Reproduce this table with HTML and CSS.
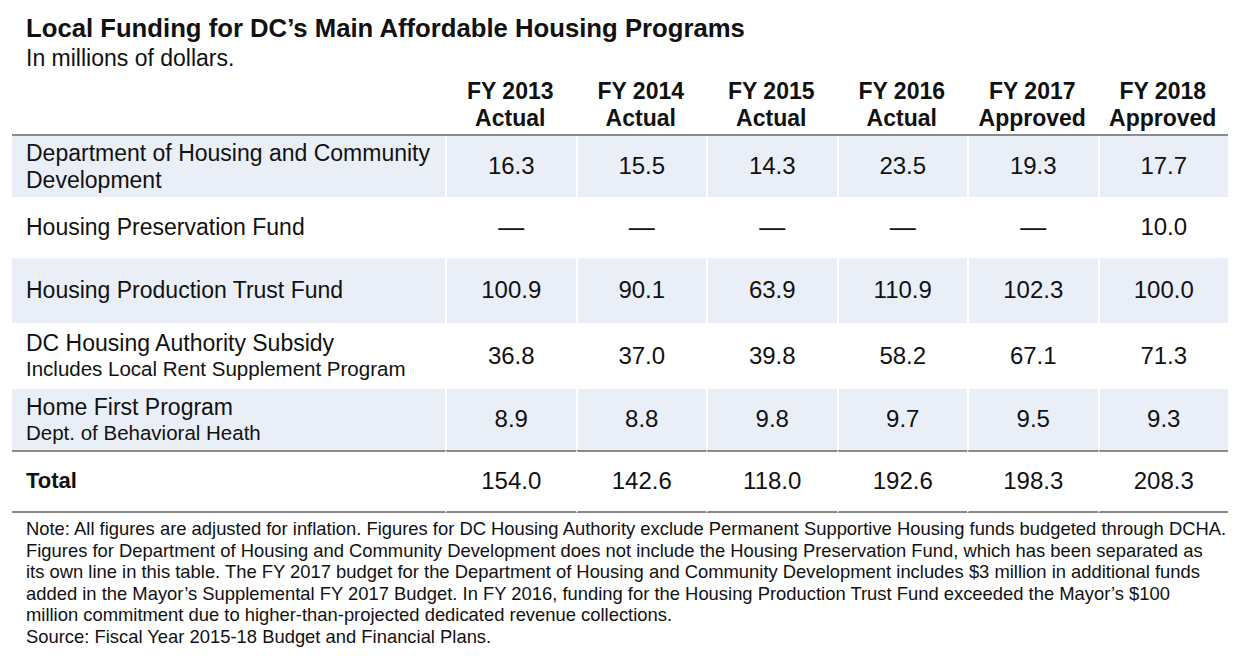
FILE: index.html
```html
<!DOCTYPE html>
<html>
<head>
<meta charset="utf-8">
<link rel="stylesheet" href="styles.css">
</head>
<body>
<div class="page">
  <header class="head">
    <h1 class="title">Local Funding for DC’s Main Affordable Housing Programs</h1>
    <p class="subtitle">In millions of dollars.</p>
  </header>
  <table class="data">
    <thead>
      <tr>
        <th class="lab"></th>
        <th>FY 2013<br>Actual</th>
        <th>FY 2014<br>Actual</th>
        <th>FY 2015<br>Actual</th>
        <th>FY 2016<br>Actual</th>
        <th>FY 2017<br>Approved</th>
        <th>FY 2018<br>Approved</th>
      </tr>
    </thead>
    <tbody>
      <tr class="shade r1">
        <td class="lab">Department of Housing and Community<br>Development</td>
        <td>16.3</td><td>15.5</td><td>14.3</td><td>23.5</td><td>19.3</td><td>17.7</td>
      </tr>
      <tr class="r2">
        <td class="lab">Housing Preservation Fund</td>
        <td><span class="dash">—</span></td><td><span class="dash">—</span></td><td><span class="dash">—</span></td><td><span class="dash">—</span></td><td><span class="dash">—</span></td><td>10.0</td>
      </tr>
      <tr class="shade r3">
        <td class="lab">Housing Production Trust Fund</td>
        <td>100.9</td><td>90.1</td><td>63.9</td><td>110.9</td><td>102.3</td><td>100.0</td>
      </tr>
      <tr class="r4">
        <td class="lab">DC Housing Authority Subsidy<br><span class="sub">Includes Local Rent Supplement Program</span></td>
        <td>36.8</td><td>37.0</td><td>39.8</td><td>58.2</td><td>67.1</td><td>71.3</td>
      </tr>
      <tr class="shade r5">
        <td class="lab">Home First Program<br><span class="sub">Dept. of Behavioral Heath</span></td>
        <td>8.9</td><td>8.8</td><td>9.8</td><td>9.7</td><td>9.5</td><td>9.3</td>
      </tr>
      <tr class="total">
        <td class="lab">Total</td>
        <td>154.0</td><td>142.6</td><td>118.0</td><td>192.6</td><td>198.3</td><td>208.3</td>
      </tr>
    </tbody>
  </table>
  <p class="note">Note: All figures are adjusted for inflation. Figures for DC Housing Authority exclude Permanent Supportive Housing funds budgeted through DCHA.<br>Figures for Department of Housing and Community Development does not include the Housing Preservation Fund, which has been separated as<br>its own line in this table. The FY 2017 budget for the Department of Housing and Community Development includes $3 million in additional funds<br>added in the Mayor’s Supplemental FY 2017 Budget. In FY 2016, funding for the Housing Production Trust Fund exceeded the Mayor’s $100<br>million commitment due to higher-than-projected dedicated revenue collections.<br>Source: Fiscal Year 2015-18 Budget and Financial Plans.</p>
</div>
</body>
</html>
```
FILE: styles.css
```css
html, body {
  margin: 0;
  padding: 0;
  background: #ffffff;
}
body {
  font-family: "Liberation Sans", Arial, sans-serif;
  color: #111111;
}
.page {
  width: 1216px;
  padding: 0 14px 0 12px;
}
.head {
  padding-left: 14px;
  padding-top: 13px;
}
.title {
  margin: 0;
  font-size: 25.7px;
  line-height: 30px;
  font-weight: bold;
}
.subtitle {
  margin: 0;
  font-size: 23px;
  line-height: 30px;
}
.data {
  width: 1216px;
  border-collapse: separate;
  border-spacing: 0;
  table-layout: fixed;
  margin-top: 5px;
}
.data th, .data td {
  padding: 0;
  text-align: center;
  font-size: 24px;
}
.data th {
  width: 130.5px;
  font-weight: bold;
  font-size: 23px;
  line-height: 27px;
  padding-bottom: 2px;
  border-bottom: 2px solid #8a8a8a;
  vertical-align: bottom;
}
.data th.lab {
  width: 433px;
}
.data td {
  line-height: 26.5px;
  border-left: 2px solid #ffffff;
}
.data td.lab {
  text-align: left;
  padding-left: 14px;
  border-left: none;
  font-size: 23px;
}
.shade td {
  background: #eaeff7;
}
.r1 td { height: 61px; }
.r2 td { height: 61px; }
.r3 td { height: 65px; }
.r4 td { height: 66px; }
.r5 td { height: 61px; }
.r4 td.lab, .r5 td.lab { line-height: 25px; }
.sub {
  font-size: 20.5px;
}
.dash {
  display: inline-block;
  font-size: 26px;
}
.total td {
  height: 59px;
  border-top: 2px solid #8a8a8a;
  border-bottom: 2px solid #8a8a8a;
  border-left-color: transparent;
}
.total td.lab {
  font-weight: bold;
  font-size: 22px;
}
.note {
  margin: 5px 0 0 14px;
  font-size: 18.4px;
  line-height: 21.6px;
  white-space: nowrap;
}
```
